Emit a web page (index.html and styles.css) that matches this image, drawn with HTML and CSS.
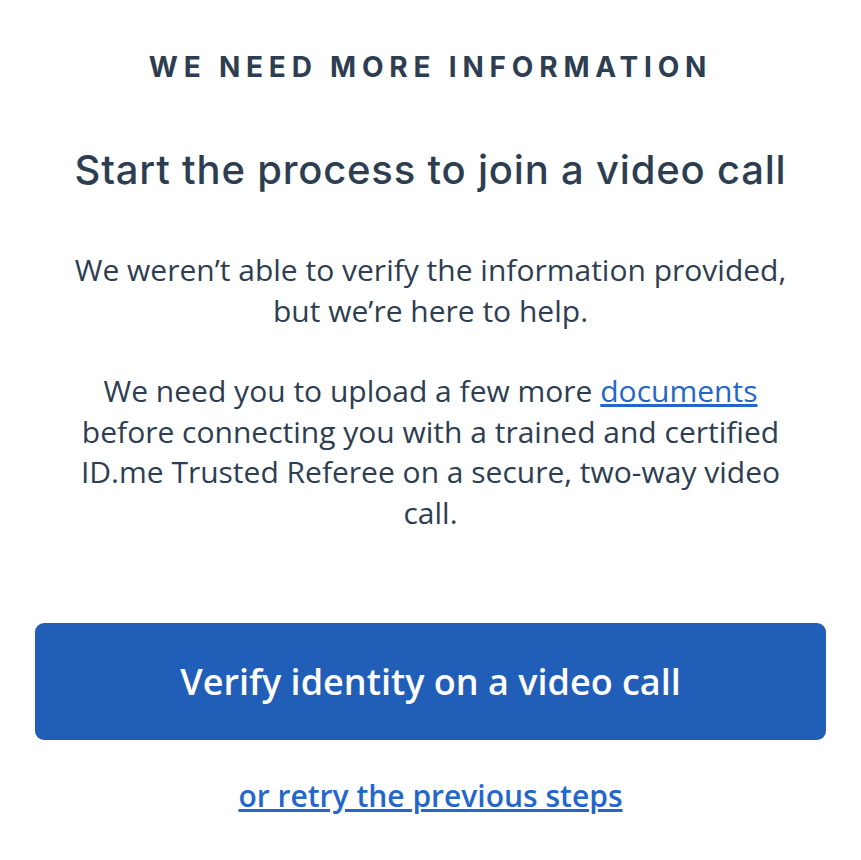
FILE: index.html
```html
<!DOCTYPE html>
<html lang="en">
<head>
<meta charset="utf-8">
<title>We need more information</title>
<link rel="stylesheet" href="styles.css">
</head>
<body>
<main class="page">
  <h2 class="eyebrow">WE NEED MORE INFORMATION</h2>
  <h1 class="title">Start the process to join a video call</h1>
  <div class="copy">
    <p>We weren’t able to verify the information provided, but we’re here to help.</p>
    <p>We need you to upload a few more <a href="#" class="inline-link">documents</a> before connecting you with a trained and certified ID.me Trusted Referee on a secure, two-way video call.</p>
  </div>
  <button class="primary" type="button">Verify identity on a video call</button>
  <a href="#" class="retry">or retry the previous steps</a>
</main>
</body>
</html>
```
FILE: styles.css
```css
html, body {
  margin: 0;
  padding: 0;
  background: #ffffff;
}
.page {
  display: flex;
  flex-direction: column;
  align-items: center;
  padding: 47px 35px 0;
  text-align: center;
  color: #2e3e52;
  font-family: "Open Sans", "Noto Sans", sans-serif;
}
.eyebrow {
  margin: 0;
  font-family: "Inter", "Noto Sans", sans-serif;
  font-weight: 700;
  font-size: 28px;
  line-height: 40px;
  letter-spacing: 5.8px;
}
.title {
  margin: 59px 0 0;
  font-family: "Inter", "Noto Sans", sans-serif;
  font-weight: 500;
  font-size: 40px;
  line-height: 48px;
  letter-spacing: 0.8px;
}
.copy {
  margin-top: 56px;
  width: 720px;
  font-size: 30px;
  line-height: 40.5px;
}
.copy p {
  margin: 0 0 40px;
}
.copy p:last-child {
  margin-bottom: 0;
}
.inline-link {
  color: #2466c9;
  text-decoration: underline;
}
.primary {
  margin-top: 90px;
  width: 100%;
  height: 117px;
  border: 0;
  border-radius: 9px;
  background: #215eb7;
  color: #ffffff;
  font-family: "Open Sans", "Noto Sans", sans-serif;
  font-weight: 600;
  font-size: 36px;
  cursor: pointer;
}
.retry {
  margin-top: 36px;
  color: #2466c9;
  font-weight: 600;
  font-size: 30px;
  line-height: 40px;
  text-decoration: underline;
}
```
